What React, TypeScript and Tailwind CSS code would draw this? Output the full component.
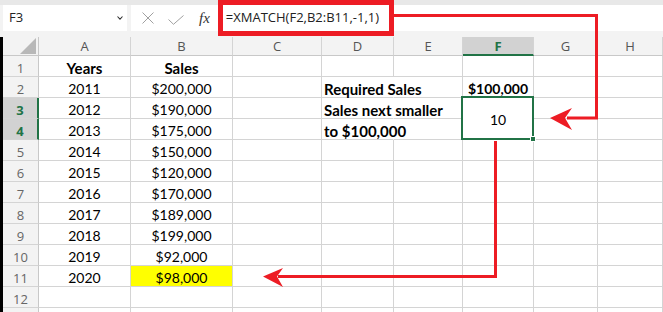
import React from 'react';

type Row = {
  n: number;
  a?: string;
  b?: string;
  d?: string;
  f?: string;
  bold?: boolean;
  yellow?: boolean;
};

const rows: Row[] = [
  { n: 1, a: 'Years', b: 'Sales', bold: true },
  { n: 2, a: '2011', b: '$200,000', d: 'Required Sales', f: '$100,000' },
  { n: 3, a: '2012', b: '$190,000', d: 'Sales next smaller' },
  { n: 4, a: '2013', b: '$175,000', d: 'to $100,000' },
  { n: 5, a: '2014', b: '$150,000' },
  { n: 6, a: '2015', b: '$120,000' },
  { n: 7, a: '2016', b: '$170,000' },
  { n: 8, a: '2017', b: '$189,000' },
  { n: 9, a: '2018', b: '$199,000' },
  { n: 10, a: '2019', b: '$92,000' },
  { n: 11, a: '2020', b: '$98,000', yellow: true },
  { n: 12 },
  { n: 13 },
];

const letters = ['A', 'B', 'C', 'D', 'E', 'F', 'G', 'H'];

const cell = 'border-r border-b border-[#d4d4d4] flex items-end leading-[16px] text-[14px]';

export default function App() {
  return (
    <div className="relative w-[663px] h-[312px] overflow-hidden bg-white font-['Lato',sans-serif] text-black">
      {/* Formula bar */}
      <div className="h-[37px] bg-[#f3f3f3] flex flex-col">
        <div className="h-[5px] bg-[#e8e8e8]" />
        <div className="h-[26px] flex pl-[3px]">
          <div className="w-[124px] bg-white flex items-center justify-between pl-[6px] pr-[4px]">
            <span className="font-['Open_Sans',sans-serif] text-[13px] text-[#222]">F3</span>
            <svg width="6" height="4" viewBox="0 0 6 4">
              <path d="M0.5 0.5 L3 3.2 L5.5 0.5" fill="none" stroke="#333" strokeWidth="1.1" />
            </svg>
          </div>
          <div className="w-[4px]" />
          <div className="flex-1 bg-white flex items-center pl-[11px]">
            <svg width="12" height="12" viewBox="0 0 12 12">
              <path d="M0.5 0.5 L11.5 11.5 M11.5 0.5 L0.5 11.5" stroke="#a0a0a0" strokeWidth="1" />
            </svg>
            <svg className="ml-[14px] mt-[4px]" width="16" height="10" viewBox="0 0 16 10">
              <path d="M0.5 4.5 L5.5 9.3 L15.5 0.5" fill="none" stroke="#a0a0a0" strokeWidth="1" />
            </svg>
            <span className="ml-[15px] font-['Liberation_Serif',serif] italic text-[15px] text-[#333]">fx</span>
            <span className="ml-[16px] font-['Open_Sans',sans-serif] text-[13px] text-[#222]">
              =XMATCH(F2,B2:B11,-1,1)
            </span>
          </div>
        </div>
      </div>

      {/* Sheet */}
      <div className="flex">
        <div className="w-[3px] bg-black" />
        <div className="grid grid-cols-[36px_92px_102px_89px_72px_69px_71px_64px_65px] grid-rows-[19px_repeat(13,21px)]">
          {/* column headers */}
          <div className="bg-[#f3f3f3] border-r border-b border-[#c8c8c8] flex items-end justify-end pr-[2px] pb-[1px]">
            <svg width="16" height="16" viewBox="0 0 16 16">
              <polygon points="0,16 16,0 16,16" fill="#b8b8b8" />
            </svg>
          </div>
          {letters.map((l) =>
            l === 'F' ? (
              <div
                key={l}
                className="bg-[#d2d2d2] border-r border-[#d4d4d4] border-b-2 border-b-[#217346] flex items-center justify-center font-['Open_Sans',sans-serif] text-[13px] font-bold text-[#217346] leading-[16px]"
              >
                {l}
              </div>
            ) : (
              <div
                key={l}
                className="bg-[#f3f3f3] border-r border-b border-[#d4d4d4] border-b-[#c8c8c8] flex items-center justify-center font-['Open_Sans',sans-serif] text-[13px] text-[#555] leading-[16px]"
              >
                {l}
              </div>
            )
          )}

          {rows.map((r) => {
            const sel = r.n === 3 || r.n === 4;
            const overflowD = r.n >= 2 && r.n <= 4;
            return (
              <React.Fragment key={r.n}>
                <div
                  className={
                    sel
                      ? "bg-[#d2d2d2] border-b border-[#d4d4d4] border-r-2 border-r-[#217346] flex items-end justify-center leading-[16px] font-['Open_Sans',sans-serif] text-[13px] font-bold text-[#217346]"
                      : "bg-[#f3f3f3] border-r border-b border-[#d4d4d4] border-r-[#c8c8c8] flex items-end justify-center leading-[16px] font-['Open_Sans',sans-serif] text-[13px] text-[#666]"
                  }
                >
                  {r.n < 13 ? r.n : ''}
                </div>
                <div className={`${cell} justify-center ${r.bold ? 'font-bold text-[15px]' : ''}`}>{r.a}</div>
                <div
                  className={`${cell} justify-center ${r.bold ? 'font-bold text-[15px]' : ''} ${
                    r.yellow ? 'bg-[#ffff00]' : ''
                  }`}
                >
                  {r.b}
                </div>
                <div className={cell} />
                <div
                  className={`${cell} pl-[2px] whitespace-nowrap font-bold text-[15px] ${
                    overflowD ? 'border-r-transparent' : ''
                  }`}
                >
                  {r.d}
                </div>
                <div className={cell} />
                {r.n === 3 ? (
                  <div className={`${cell} row-span-2 relative justify-center text-[13px] pb-[11px]`}>
                    10
                    <div className="absolute -left-[2px] -top-[2px] -right-[1px] -bottom-[1px] border-2 border-[#217346]" />
                    <div className="absolute -right-[3px] -bottom-[3px] w-[6px] h-[6px] bg-[#217346] border border-white" />
                  </div>
                ) : r.n === 4 ? null : (
                  <div className={`${cell} justify-center font-bold text-[14px]`}>{r.f}</div>
                )}
                <div className={cell} />
                <div className={cell} />
              </React.Fragment>
            );
          })}
        </div>
      </div>

      {/* Annotations */}
      <svg className="absolute left-0 top-0 pointer-events-none" width="663" height="312" viewBox="0 0 663 312">
        <rect x="220.5" y="2.5" width="171" height="31" fill="none" stroke="#ed1c24" strokeWidth="5" />
        <polyline points="394,15.5 596.5,15.5 596.5,118 567,118" fill="none" stroke="#ed1c24" strokeWidth="3" />
        <polygon points="550,118 572,108 565,118 572,130" fill="#ed1c24" />
        <polyline points="495.5,141 495.5,276.5 278,276.5" fill="none" stroke="#ed1c24" strokeWidth="3" />
        <polygon points="263,276.5 283,268 277,276.5 283,287" fill="#ed1c24" />
      </svg>
    </div>
  );
}
